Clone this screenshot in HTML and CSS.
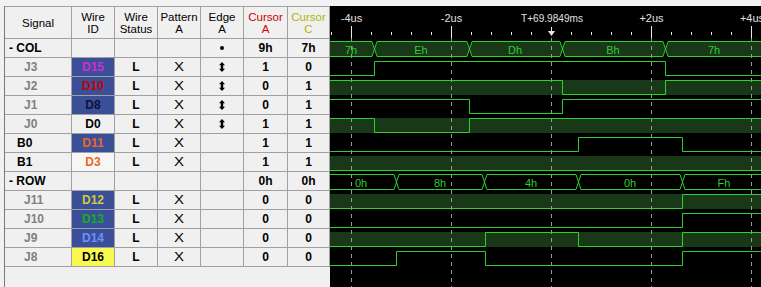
FILE: index.html
```html
<!DOCTYPE html>
<html>
<head>
<meta charset="utf-8">
<link rel="stylesheet" href="styles.css">
</head>
<body>
<div class="app">
  <div class="panel">
    <div class="grid">
      <div class="cell hd">Signal</div>
      <div class="cell hd">Wire<br>ID</div>
      <div class="cell hd">Wire<br>Status</div>
      <div class="cell hd">Pattern<br>A</div>
      <div class="cell hd">Edge<br>A</div>
      <div class="cell hd cur-a">Cursor<br>A</div>
      <div class="cell hd cur-c">Cursor<br>C</div>

      <div class="cell name grp">- COL</div>
      <div class="cell"></div><div class="cell"></div><div class="cell"></div>
      <div class="cell"><span class="dot"></span></div>
      <div class="cell v">9h</div><div class="cell v">7h</div>

      <div class="cell name pin">J3</div>
      <div class="cell v blue t-mag">D15</div>
      <div class="cell v">L</div><div class="cell"><span class="x">X</span></div>
      <div class="cell"><svg class="arr" width="6" height="10" viewBox="0 0 6 10"><path d="M3 0L6 3.2H4.2V6.8H6L3 10L0 6.8H1.8V3.2H0Z"/></svg></div>
      <div class="cell v">1</div><div class="cell v">0</div>

      <div class="cell name pin">J2</div>
      <div class="cell v blue t-red">D10</div>
      <div class="cell v">L</div><div class="cell"><span class="x">X</span></div>
      <div class="cell"><svg class="arr" width="6" height="10" viewBox="0 0 6 10"><path d="M3 0L6 3.2H4.2V6.8H6L3 10L0 6.8H1.8V3.2H0Z"/></svg></div>
      <div class="cell v">0</div><div class="cell v">1</div>

      <div class="cell name pin">J1</div>
      <div class="cell v blue t-dark">D8</div>
      <div class="cell v">L</div><div class="cell"><span class="x">X</span></div>
      <div class="cell"><svg class="arr" width="6" height="10" viewBox="0 0 6 10"><path d="M3 0L6 3.2H4.2V6.8H6L3 10L0 6.8H1.8V3.2H0Z"/></svg></div>
      <div class="cell v">0</div><div class="cell v">1</div>

      <div class="cell name pin">J0</div>
      <div class="cell v">D0</div>
      <div class="cell v">L</div><div class="cell"><span class="x">X</span></div>
      <div class="cell"><svg class="arr" width="6" height="10" viewBox="0 0 6 10"><path d="M3 0L6 3.2H4.2V6.8H6L3 10L0 6.8H1.8V3.2H0Z"/></svg></div>
      <div class="cell v">1</div><div class="cell v">1</div>

      <div class="cell name bit">B0</div>
      <div class="cell v blue t-org">D11</div>
      <div class="cell v">L</div><div class="cell"><span class="x">X</span></div>
      <div class="cell"></div>
      <div class="cell v">1</div><div class="cell v">1</div>

      <div class="cell name bit">B1</div>
      <div class="cell v t-org light">D3</div>
      <div class="cell v">L</div><div class="cell"><span class="x">X</span></div>
      <div class="cell"></div>
      <div class="cell v">1</div><div class="cell v">1</div>

      <div class="cell name grp">- ROW</div>
      <div class="cell"></div><div class="cell"></div><div class="cell"></div><div class="cell"></div>
      <div class="cell v">0h</div><div class="cell v">0h</div>

      <div class="cell name pin">J11</div>
      <div class="cell v blue t-yel">D12</div>
      <div class="cell v">L</div><div class="cell"><span class="x">X</span></div>
      <div class="cell"></div>
      <div class="cell v">0</div><div class="cell v">0</div>

      <div class="cell name pin">J10</div>
      <div class="cell v blue t-grn">D13</div>
      <div class="cell v">L</div><div class="cell"><span class="x">X</span></div>
      <div class="cell"></div>
      <div class="cell v">0</div><div class="cell v">0</div>

      <div class="cell name pin">J9</div>
      <div class="cell v blue t-lbl">D14</div>
      <div class="cell v">L</div><div class="cell"><span class="x">X</span></div>
      <div class="cell"></div>
      <div class="cell v">0</div><div class="cell v">0</div>

      <div class="cell name pin">J8</div>
      <div class="cell v yellow">D16</div>
      <div class="cell v">L</div><div class="cell"><span class="x">X</span></div>
      <div class="cell"></div>
      <div class="cell v">0</div><div class="cell v">0</div>
    </div>
  </div>

  <div class="wave">
    <svg width="431" height="281" viewBox="330 6 431 281">
      <rect x="330" y="6" width="431" height="281" fill="#000"/>
      <g fill="#183818">
        <rect x="330" y="80" width="431" height="15"/>
        <rect x="330" y="118" width="431" height="15"/>
        <rect x="330" y="156" width="431" height="15"/>
        <rect x="330" y="194" width="431" height="15"/>
        <rect x="330" y="232" width="431" height="15"/>
      </g>
      <path d="M330 41.5H372L374.5 49L372 56.5H330Z M377 41.5H467L469.5 49L467 56.5H377L374.5 49Z M472 41.5H560L562.5 49L560 56.5H472L469.5 49Z M565 41.5H663L665.5 49L663 56.5H565L562.5 49Z M668 41.5H761V56.5H668L665.5 49Z" fill="#183818"/>
      <g stroke="#9a9a9a" stroke-width="1" stroke-dasharray="4 4">
        <line x1="351.5" y1="38" x2="351.5" y2="287"/>
        <line x1="451.5" y1="38" x2="451.5" y2="287"/>
        <line x1="551.5" y1="38" x2="551.5" y2="287"/>
        <line x1="651.5" y1="38" x2="651.5" y2="287"/>
        <line x1="751.5" y1="38" x2="751.5" y2="287"/>
      </g>
      <g fill="#e8e8e8">
        <rect x="331" y="32" width="1" height="3"/>
        <rect x="371" y="32" width="1" height="3"/>
        <rect x="391" y="32" width="1" height="3"/>
        <rect x="411" y="32" width="1" height="3"/>
        <rect x="431" y="32" width="1" height="3"/>
        <rect x="471" y="32" width="1" height="3"/>
        <rect x="491" y="32" width="1" height="3"/>
        <rect x="511" y="32" width="1" height="3"/>
        <rect x="531" y="32" width="1" height="3"/>
        <rect x="571" y="32" width="1" height="3"/>
        <rect x="591" y="32" width="1" height="3"/>
        <rect x="611" y="32" width="1" height="3"/>
        <rect x="631" y="32" width="1" height="3"/>
        <rect x="671" y="32" width="1" height="3"/>
        <rect x="691" y="32" width="1" height="3"/>
        <rect x="711" y="32" width="1" height="3"/>
        <rect x="731" y="32" width="1" height="3"/>
        <rect x="351" y="26" width="1" height="12"/>
        <rect x="451" y="26" width="1" height="12"/>
        <rect x="651" y="26" width="1" height="12"/>
        <rect x="751" y="26" width="1" height="12"/>
        <rect x="551" y="27" width="1" height="5"/>
        <path d="M548 31H555L551.5 36Z"/>
      </g>
      <g class="tlabel" fill="#e0e0e0" text-anchor="middle">
        <text x="351.5" y="22">-4us</text>
        <text x="451.5" y="22">-2us</text>
        <text x="552" y="22" textLength="62" lengthAdjust="spacingAndGlyphs">T+69.9849ms</text>
        <text x="651.5" y="22">+2us</text>
        <text x="752" y="22">+4us</text>
      </g>
      <g fill="none" stroke="#2ed02e" stroke-width="1">
        <path d="M330 41.5H372L377 56.5H467L472 41.5H560L565 56.5H663L668 41.5H761 M330 56.5H372L377 41.5H467L472 56.5H560L565 41.5H663L668 56.5H761"/>
        <path d="M330 75.5H374.5V61.5H665.5V75.5H761"/>
        <path d="M330 80.5H562.5V94.5H665.5V80.5H761"/>
        <path d="M330 99.5H469.5V113.5H562.5V99.5H761"/>
        <path d="M330 118.5H374.5V132.5H469.5V118.5H761"/>
        <path d="M330 151.5H578.5V137.5H682.5V151.5H761"/>
        <path d="M330 170.5H761"/>
        <path d="M330 174.5H394L399 189.5H482L487 174.5H576L581 189.5H680L685 174.5H761 M330 189.5H394L399 174.5H482L487 189.5H576L581 174.5H680L685 189.5H761"/>
        <path d="M330 208.5H682.5V194.5H761"/>
        <path d="M330 227.5H682.5V213.5H761"/>
        <path d="M330 246.5H485.5V232.5H578.5V246.5H682.5V232.5H761"/>
        <path d="M330 265.5H396.5V251.5H485.5V265.5H682.5V251.5H761"/>
      </g>
      <g class="blabel" fill="#34c834" text-anchor="middle">
        <text x="351" y="54">7h</text>
        <text x="421" y="54">Eh</text>
        <text x="515" y="54">Dh</text>
        <text x="613" y="54">Bh</text>
        <text x="714" y="54">7h</text>
        <text x="361" y="187">0h</text>
        <text x="440" y="187">8h</text>
        <text x="531" y="187">4h</text>
        <text x="630" y="187">0h</text>
        <text x="724" y="187">Fh</text>
      </g>
    </svg>
  </div>
</div>
</body>
</html>
```
FILE: styles.css
```css
html, body {
  margin: 0;
  padding: 0;
  background: #f2f2f2;
}
body {
  width: 761px;
  height: 287px;
  overflow: hidden;
  font-family: "Liberation Sans", Arial, sans-serif;
}
.app {
  display: flex;
  height: 287px;
  box-sizing: border-box;
  padding-top: 6px;
}
.panel {
  margin-left: 4px;
  width: 326px;
  box-sizing: border-box;
  border-left: 1px solid #7a7a7a;
  background: #f0f0f0;
}
.grid {
  display: grid;
  grid-template-columns: 67px 43px 43px 43px 43px 44px 42px;
  grid-template-rows: 32px repeat(12, 19px);
  border-top: 1px solid #a0a0a0;
}
.cell {
  box-sizing: border-box;
  border-right: 1px solid #a0a0a0;
  border-bottom: 1px solid #a0a0a0;
  display: flex;
  align-items: center;
  justify-content: center;
  font-size: 12px;
  color: #000;
  background: #f0f0f0;
}
.hd {
  font-size: 11.5px;
  line-height: 12px;
  text-align: center;
  color: #000;
  padding-top: 1px;
}
.cur-a { color: #c80000; }
.cur-c { color: #b4b400; }
.v { font-weight: bold; }
.name {
  justify-content: flex-start;
  font-weight: bold;
}
.grp { padding-left: 4px; }
.bit { padding-left: 12px; }
.pin { padding-left: 19px; color: #808080; }
.blue { background: #3b4f99; }
.light { background: #f6f6f6; }
.yellow { background: #f8f850; }
.t-mag { color: #d42ad4; }
.t-red { color: #c40000; }
.t-dark { color: #10123a; }
.t-org { color: #e8691e; }
.t-yel { color: #cccc44; }
.t-grn { color: #12b020; }
.t-lbl { color: #6e90ff; }
.x {
  display: inline-block;
  transform: scaleX(1.25);
  font-size: 12px;
}
.dot {
  width: 4px;
  height: 4px;
  border-radius: 50%;
  background: #000;
}
.arr { fill: #000; display: block; }
.wave {
  width: 431px;
  height: 281px;
}
.wave svg { display: block; }
.tlabel { font-family: "Liberation Sans", Arial, sans-serif; font-size: 11px; }
.blabel { font-family: "Liberation Sans", Arial, sans-serif; font-size: 11px; }
```
